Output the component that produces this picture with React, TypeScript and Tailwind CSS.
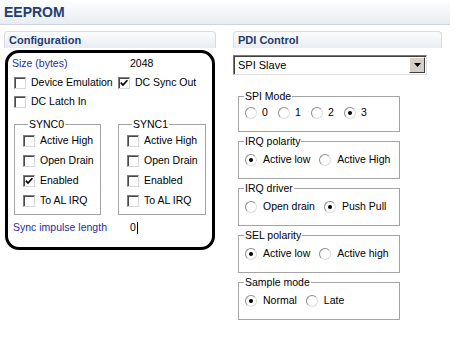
import React from 'react';

const font = { fontFamily: '"Liberation Sans", Arial, sans-serif' };

function Check({ checked = false }: { checked?: boolean }) {
  return (
    <span className="relative flex h-[12px] w-[12px] shrink-0 items-center justify-center border border-t-[#7d7d7d] border-l-[#7d7d7d] border-b-[#d8d8d8] border-r-[#d8d8d8] bg-white shadow-[inset_1px_1px_0_#4a4a4a]">
      {checked && (
        <svg width="10" height="10" viewBox="0 0 10 10">
          <path d="M1.8 4.6 L4 7 L8.4 2.2" fill="none" stroke="#000" strokeWidth="1.7" />
        </svg>
      )}
    </span>
  );
}

function CheckRow({ label, checked }: { label: string; checked?: boolean }) {
  return (
    <div className="flex h-[20px] items-center gap-[5px]">
      <Check checked={checked} />
      <span>{label}</span>
    </div>
  );
}

function Radio({ on = false }: { on?: boolean }) {
  return (
    <span className="flex h-[12px] w-[12px] shrink-0 items-center justify-center rounded-full border border-t-[#8c8c8c] border-l-[#8c8c8c] border-b-[#dcdcdc] border-r-[#dcdcdc] bg-white">
      {on && <span className="h-[4px] w-[4px] rounded-full bg-black" />}
    </span>
  );
}

function Group({ title, className, children }: { title: string; className?: string; children: React.ReactNode }) {
  return (
    <fieldset className={`border border-[#a4a4a4] ${className ?? ''}`}>
      <legend className="ml-[5px] px-[1px] leading-[14px]">{title}</legend>
      {children}
    </fieldset>
  );
}

function SectionHead({ title }: { title: string }) {
  return (
    <div className="flex h-[17px] items-center rounded-t-[4px] border border-b-0 border-[#d6dce6] bg-gradient-to-b from-[#fbfcfd] to-[#e9edf3] pl-[4px] text-[11px] font-bold text-[#1f3c6e]">
      {title}
    </div>
  );
}

function RadioGroup({ title, items, sel }: { title: string; items: string[]; sel: number }) {
  return (
    <Group title={title} className="w-[162px] pb-[8px]">
      <div className="mt-[2px] flex h-[20px] items-center gap-[9px] pl-[6px]">
        {items.map((it, i) => (
          <div key={it} className="flex items-center gap-[6px]">
            <Radio on={i === sel} />
            <span>{it}</span>
          </div>
        ))}
      </div>
    </Group>
  );
}

export default function App() {
  return (
    <div className="h-[349px] w-[474px] overflow-hidden bg-white text-[10.5px] text-black" style={font}>
      <div className="flex h-[25px] w-[450px] items-center border-b border-[#cdd4df] bg-gradient-to-b from-white to-[#e8ecf2] pl-[4px] text-[14px] font-bold text-[#22406f]">
        EEPROM
      </div>

      <div className="mt-[6px] flex">
        <div className="ml-[4px] w-[212px]">
          <SectionHead title="Configuration" />
          <div className="ml-[1px] mt-[2px] h-[200px] w-[210px] rounded-[14px] border-[3px] border-black pt-[1px]">
            <div className="flex h-[19px] items-center pl-[4px]">
              <span className="w-[118px] text-[#2a2a9e]">Size (bytes)</span>
              <span>2048</span>
            </div>
            <div className="flex h-[19px] items-center pl-[6px]">
              <div className="flex w-[104px] items-center gap-[5px]">
                <Check />
                <span>Device Emulation</span>
              </div>
              <div className="flex items-center gap-[5px]">
                <Check checked />
                <span>DC Sync Out</span>
              </div>
            </div>
            <div className="flex h-[19px] items-center gap-[5px] pl-[6px]">
              <Check />
              <span>DC Latch In</span>
            </div>
            <div className="mt-[6px] flex pl-[6px]">
              <Group title="SYNC0" className="w-[87px] pb-[3px] pl-[8px]">
                <CheckRow label="Active High" />
                <CheckRow label="Open Drain" />
                <CheckRow label="Enabled" checked />
                <CheckRow label="To AL IRQ" />
              </Group>
              <Group title="SYNC1" className="ml-[17px] w-[88px] pb-[3px] pl-[8px]">
                <CheckRow label="Active High" />
                <CheckRow label="Open Drain" />
                <CheckRow label="Enabled" />
                <CheckRow label="To AL IRQ" />
              </Group>
            </div>
            <div className="mt-[4px] flex h-[18px] items-center pl-[5px]">
              <span className="w-[117px] text-[#2a2a9e]">Sync impulse length</span>
              <span>0</span>
              <span className="ml-[1px] h-[12px] w-[1px] bg-black" />
            </div>
          </div>
        </div>

        <div className="ml-[17px] w-[209px]">
          <SectionHead title="PDI Control" />
          <div className="mt-[7px] flex h-[20px] w-[194px] border border-t-[#7a7a7a] border-l-[#7a7a7a] border-b-[#e0e0e0] border-r-[#e0e0e0] bg-white shadow-[inset_1px_1px_0_#404040]">
            <span className="flex flex-1 items-center pl-[4px] text-[11px]">SPI Slave</span>
            <span className="m-[1px] flex w-[16px] items-center justify-center border border-t-white border-l-white border-b-[#404040] border-r-[#404040] bg-[#d4d0c8]">
              <svg width="7" height="4" viewBox="0 0 7 4">
                <path d="M0 0 H7 L3.5 4 Z" fill="#000" />
              </svg>
            </span>
          </div>
          <div className="ml-[5px] mt-[14px] flex flex-col gap-[2px]">
            <Group title="SPI Mode" className="w-[162px] pb-[8px]">
              <div className="flex h-[20px] items-center pl-[6px]">
                {['0', '1', '2', '3'].map((m) => (
                  <div key={m} className="flex w-[33px] items-center gap-[5px]">
                    <Radio on={m === '3'} />
                    <span>{m}</span>
                  </div>
                ))}
              </div>
            </Group>
            <RadioGroup title="IRQ polarity" items={['Active low', 'Active High']} sel={0} />
            <RadioGroup title="IRQ driver" items={['Open drain', 'Push Pull']} sel={1} />
            <RadioGroup title="SEL polarity" items={['Active low', 'Active high']} sel={0} />
            <RadioGroup title="Sample mode" items={['Normal', 'Late']} sel={0} />
          </div>
        </div>
      </div>
    </div>
  );
}
